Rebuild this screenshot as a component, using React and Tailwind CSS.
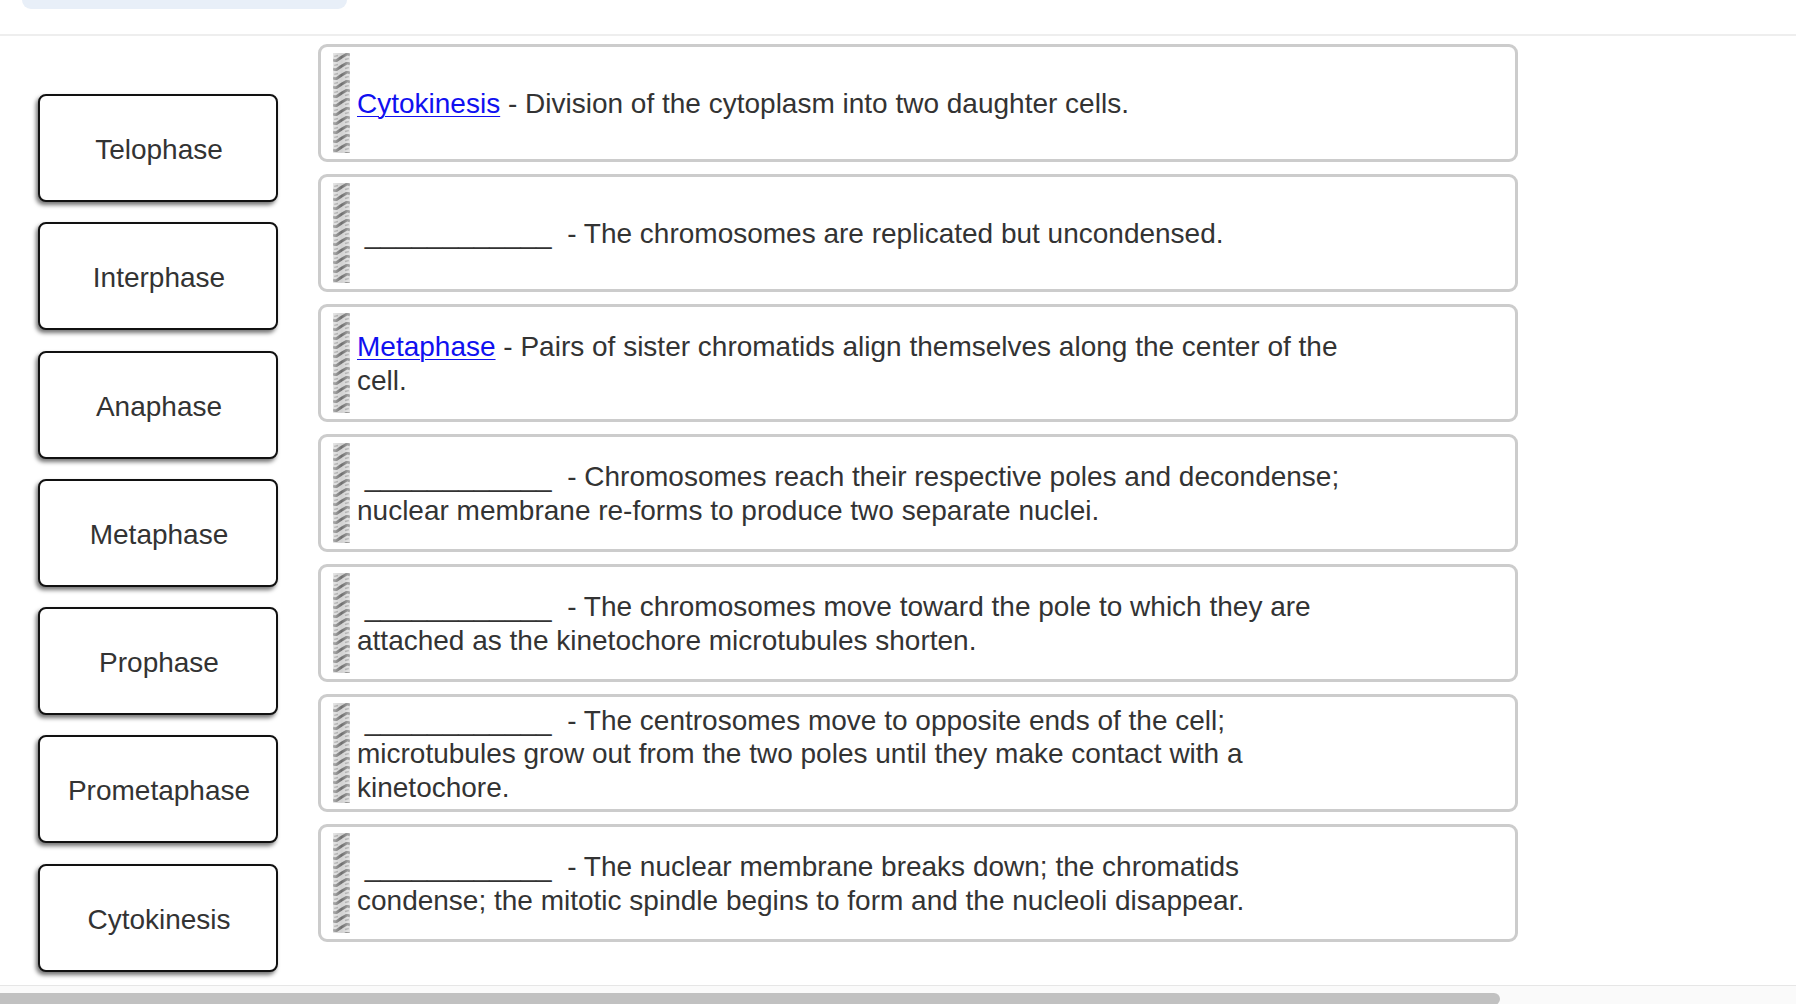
const phases = [
  "Telophase",
  "Interphase",
  "Anaphase",
  "Metaphase",
  "Prophase",
  "Prometaphase",
  "Cytokinesis",
];

const items = [
  { answer: "Cytokinesis", text: "Division of the cytoplasm into two daughter cells." },
  { answer: null, text: "The chromosomes are replicated but uncondensed." },
  {
    answer: "Metaphase",
    text: "Pairs of sister chromatids align themselves along the center of the cell.",
  },
  {
    answer: null,
    text: "Chromosomes reach their respective poles and decondense; nuclear membrane re-forms to produce two separate nuclei.",
  },
  {
    answer: null,
    text: "The chromosomes move toward the pole to which they are attached as the kinetochore microtubules shorten.",
  },
  {
    answer: null,
    text: "The centrosomes move to opposite ends of the cell; microtubules grow out from the two poles until they make contact with a kinetochore.",
  },
  {
    answer: null,
    text: "The nuclear membrane breaks down; the chromatids condense; the mitotic spindle begins to form and the nucleoli disappear.",
  },
];

// Drag handle texture on the left edge of every target row
function Grip() {
  return (
    <svg className="h-full w-[17px] shrink-0" width="17" height="100%">
      <defs>
        <pattern id="grip-zig" width="17" height="9" patternUnits="userSpaceOnUse">
          <rect width="17" height="9" fill="#d2d2d2" />
          <path
            d="M0 7 L3 8 L8 4.5 L14 1 L17 2"
            stroke="#6f6f6f"
            strokeWidth="2.8"
            fill="none"
            strokeLinejoin="round"
          />
          <path d="M1 3.5 L5 2.5" stroke="#9c9c9c" strokeWidth="1.6" fill="none" />
          <path d="M12 6.5 L16 5.5" stroke="#9c9c9c" strokeWidth="1.6" fill="none" />
        </pattern>
        <linearGradient id="grip-shade" x1="0" x2="1" y1="0" y2="0">
          <stop offset="0" stopColor="#ffffff" stopOpacity="0.45" />
          <stop offset="0.5" stopColor="#ffffff" stopOpacity="0" />
          <stop offset="1" stopColor="#ffffff" stopOpacity="0.45" />
        </linearGradient>
      </defs>
      <rect width="100%" height="100%" fill="url(#grip-zig)" />
      <rect width="100%" height="100%" fill="url(#grip-shade)" />
    </svg>
  );
}

function Target({ answer, text }) {
  return (
    <div className="flex h-[118px] w-[1200px] shrink-0 items-stretch rounded-[9px] border-[3px] border-[#cccccc] bg-white pl-[12px]">
      <div className="my-[6px] flex">
        <Grip />
      </div>
      <div className="ml-[7px] flex items-center pt-[2px]">
        <p className="w-[1000px] text-[28px] leading-[1.2] text-[#333333]">
          {answer ? (
            <a href="#" className="text-[#1010f0] underline decoration-1 underline-offset-[3px]">
              {answer}
            </a>
          ) : (
            <span>{"\u00a0____________\u00a0"}</span>
          )}
          {" - "}
          {text}
        </p>
      </div>
    </div>
  );
}

export default function App() {
  return (
    <div
      className="flex h-[1004px] w-[1796px] flex-col overflow-hidden bg-white"
      style={{ fontFamily: '"Liberation Sans", Arial, Helvetica, sans-serif' }}
    >
      <header className="h-[34px] shrink-0">
        <div className="ml-[22px] h-[9px] w-[325px] rounded-b-[10px] bg-[#e8eff8]" />
      </header>
      <div className="h-[2px] shrink-0 bg-[#eeeeee]" />

      <main className="flex flex-1">
        <div className="flex flex-col gap-[20.3px] pl-[38px] pt-[58px]">
          {phases.map((p) => (
            <div
              key={p}
              className="flex h-[108px] w-[240px] items-center justify-center rounded-[8px] border-2 border-[#111111] bg-white pt-[4px] pl-[2px] text-[28px] text-[#333333] shadow-[-2px_3px_4px_rgba(0,0,0,0.55)]"
            >
              {p}
            </div>
          ))}
        </div>
        <div className="ml-[40px] flex flex-col gap-[12px] pt-[8px]">
          {items.map((it, i) => (
            <Target key={i} answer={it.answer} text={it.text} />
          ))}
        </div>
      </main>

      <footer className="h-[19px] shrink-0 border-t border-[#e6e6e6] bg-[#fafafa]">
        <div className="mt-[7px] h-[12px] w-[1500px] rounded-r-[6px] bg-[#c1c1c1]" />
      </footer>
    </div>
  );
}
